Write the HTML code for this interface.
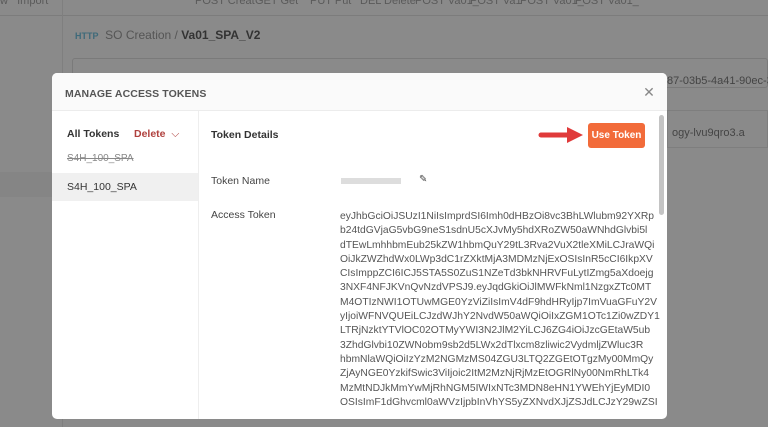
<!DOCTYPE html>
<html><head><meta charset="utf-8"><style>
*{box-sizing:border-box;margin:0;padding:0}
body{width:768px;height:427px;overflow:hidden;background:#8a8a8a;font-family:"Liberation Sans",sans-serif;position:relative;color:#3a3a3a}
.bg{position:absolute;color:#3a3a3a;font-size:12px;white-space:nowrap}
.tabs{position:absolute;left:0;top:0;width:768px;height:16px;border-bottom:1px solid #7c7c7c}
.tab{position:absolute;top:-5px;font-size:11px;color:#5a5a5a;white-space:nowrap}
.modal{position:absolute;left:52px;top:73px;width:615px;height:346px;background:#fff;border-radius:5px;overflow:hidden}
.hdr{height:38px;border-bottom:1px solid #ececec;background:#fafafa;padding:15px 13px;font-size:10.5px;font-weight:bold;color:#555;letter-spacing:.1px}
.x{position:absolute;right:12px;top:11px;font-size:14px;color:#888;font-weight:normal}
.left{position:absolute;left:0;top:38px;width:147px;bottom:0;border-right:1px solid #eee}
.right{position:absolute;left:147px;top:38px;right:0;bottom:0}
.tok{font-family:"Liberation Sans",sans-serif;font-size:10.3px;line-height:14.3px;color:#555;position:absolute;left:141px}
</style></head><body>
<div class="tabs">
<span class="tab" style="left:0">w &nbsp; Import</span>
<span class="tab" style="left:195px">POST Creat</span>
<span class="tab" style="left:255px">GET Get</span>
<span class="tab" style="left:310px">PUT Put</span>
<span class="tab" style="left:360px">DEL Delete</span>
<span class="tab" style="left:415px">POST Va01_</span>
<span class="tab" style="left:470px">POST Va1</span>
<span class="tab" style="left:520px">POST Va01_</span>
<span class="tab" style="left:575px">POST Va01_</span>
</div>
<div style="position:absolute;left:62px;top:0;width:1px;height:427px;background:#7f7f7f"></div>
<div class="bg" style="left:75px;top:28px;font-size:12px"><span style="color:#3e6a7a;font-size:9px;font-weight:bold">HTTP</span> &nbsp;<span style="color:#555">SO Creation /</span> <b style="color:#333">Va01_SPA_V2</b></div>
<div style="position:absolute;left:72px;top:58px;width:696px;height:30px;border:1px solid #7a7a7a;border-radius:3px"></div>
<div class="bg" style="left:667px;top:75px;font-size:11px;color:#444">87-03b5-4a41-90ec-3</div>
<div style="position:absolute;left:667px;top:110px;width:101px;height:38px;border:1px solid #7e7e7e"></div>
<div class="bg" style="left:672px;top:127px;font-size:11px;color:#444">ogy-lvu9qro3.a</div>
<div style="position:absolute;left:0;top:172px;width:52px;height:25px;background:#858585"></div>
<div class="modal">
<div class="hdr">MANAGE ACCESS TOKENS<span class="x">✕</span></div>
<div class="left">
<div style="position:absolute;left:15px;top:17px;font-size:10.5px;font-weight:bold;color:#333">All Tokens</div>
<div style="position:absolute;left:82px;top:17px;font-size:10.5px;font-weight:bold;color:#b0413e">Delete &nbsp;<span style="font-weight:normal">⌵</span></div>
<div style="position:absolute;left:15px;top:42px;font-size:10px;color:#888;text-decoration:line-through">S4H_100_SPA</div>
<div style="position:absolute;left:0;top:62px;width:146px;height:28px;background:#f0f0f0"></div>
<div style="position:absolute;left:15px;top:70px;font-size:10.5px;color:#333">S4H_100_SPA</div>
</div>
<div class="right">
<div style="position:absolute;left:12px;top:18px;font-size:10.5px;font-weight:bold;color:#333">Token Details</div>
<div style="position:absolute;left:12px;top:64px;font-size:10.5px;color:#444">Token Name</div>
<div style="position:absolute;left:12px;top:98px;font-size:10.5px;color:#444">Access Token</div>
<div style="position:absolute;left:142px;top:67px;width:60px;height:6px;background:#ddd"></div>
<div style="position:absolute;left:220px;top:63px;font-size:10px;color:#444">✎</div>
<div style="position:absolute;left:389px;top:12px;width:57px;height:25px;background:#f26b3a;border-radius:3px;color:#fff;font-size:10px;font-weight:bold;text-align:center;line-height:25px">Use Token</div>
<svg style="position:absolute;left:338px;top:14px" width="50" height="20"><path d="M4 10 H34" stroke="#e03a3a" stroke-width="5" stroke-linecap="round"/><path d="M30 2 L46 10 L30 18 Z" fill="#e03a3a"/></svg>
<div style="position:absolute;right:3px;top:4px;width:5px;height:100px;background:#c4c4c4;border-radius:3px"></div>
<div class="tok" style="top:99px">eyJhbGciOiJSUzI1NiIsImprdSI6Imh0dHBzOi8vc3BhLWlubm92YXRp<br>b24tdGVjaG5vbG9neS1sdnU5cXJvMy5hdXRoZW50aWNhdGlvbi5l<br>dTEwLmhhbmEub25kZW1hbmQuY29tL3Rva2VuX2tleXMiLCJraWQi<br>OiJkZWZhdWx0LWp3dC1rZXktMjA3MDMzNjExOSIsInR5cCI6IkpXV<br>CIsImppZCI6ICJ5STA5S0ZuS1NZeTd3bkNHRVFuLytIZmg5aXdoejg<br>3NXF4NFJKVnQvNzdVPSJ9.eyJqdGkiOiJlMWFkNml1NzgxZTc0MT<br>M4OTIzNWI1OTUwMGE0YzViZiIsImV4dF9hdHRyIjp7ImVuaGFuY2V<br>yIjoiWFNVQUEiLCJzdWJhY2NvdW50aWQiOiIxZGM1OTc1Zi0wZDY1<br>LTRjNzktYTVlOC02OTMyYWI3N2JlM2YiLCJ6ZG4iOiJzcGEtaW5ub<br>3ZhdGlvbi10ZWNobm9sb2d5LWx2dTlxcm8zliwic2VydmljZWluc3R<br>hbmNlaWQiOiIzYzM2NGMzMS04ZGU3LTQ2ZGEtOTgzMy00MmQy<br>ZjAyNGE0YzkifSwic3ViIjoic2ItM2MzNjRjMzEtOGRlNy00NmRhLTk4<br>MzMtNDJkMmYwMjRhNGM5IWIxNTc3MDN8eHN1YWEhYjEyMDI0<br>OSIsImF1dGhvcml0aWVzIjpbInVhYS5yZXNvdXJjZSJdLCJzY29wZSI</div>
</div>
</div>
</body></html>
